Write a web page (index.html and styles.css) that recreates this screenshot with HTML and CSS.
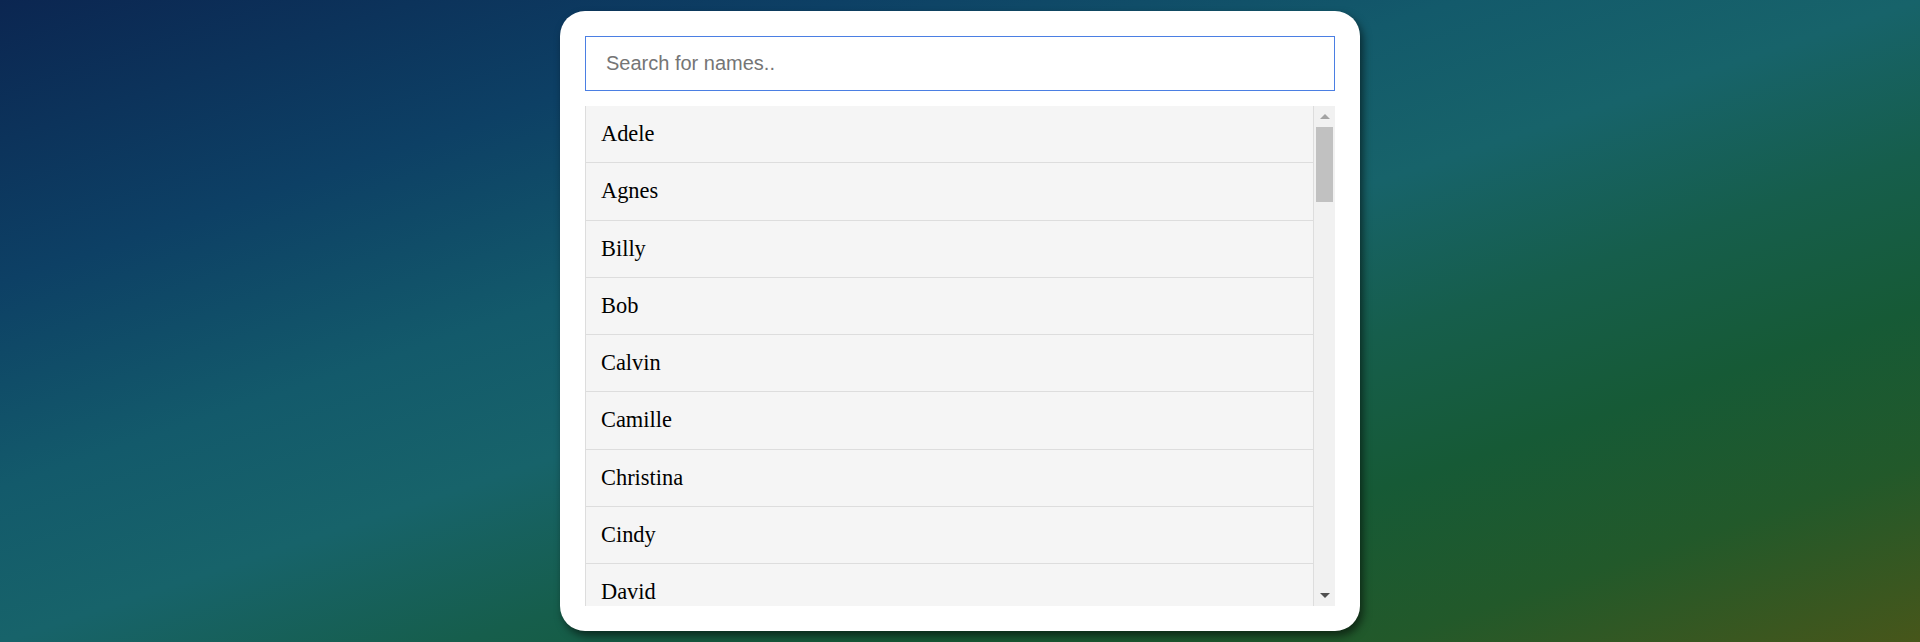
FILE: index.html
```html
<!DOCTYPE html>
<html lang="en">
<head>
<meta charset="utf-8">
<title>Search names</title>
<link rel="stylesheet" href="styles.css">
</head>
<body>
<main class="card">
  <input class="search" type="text" placeholder="Search for names..">
  <div class="listbox">
    <ul class="names">
      <li>Adele</li>
      <li>Agnes</li>
      <li>Billy</li>
      <li>Bob</li>
      <li>Calvin</li>
      <li>Camille</li>
      <li>Christina</li>
      <li>Cindy</li>
      <li>David</li>
    </ul>
    <div class="scrollbar" aria-hidden="true">
      <div class="sb-btn">
        <svg width="10" height="5" viewBox="0 0 10 5"><polygon points="0,5 10,5 5,0" fill="#a3a3a3"/></svg>
      </div>
      <div class="sb-track"><div class="sb-thumb"></div></div>
      <div class="sb-btn">
        <svg width="10" height="5" viewBox="0 0 10 5"><polygon points="0,0 10,0 5,5" fill="#505050"/></svg>
      </div>
    </div>
  </div>
</main>
</body>
</html>
```
FILE: styles.css
```css
html, body {
  margin: 0;
  height: 100%;
}

body {
  display: flex;
  align-items: center;
  justify-content: center;
  background: linear-gradient(to bottom right,
    #0b2651 0%,
    #0d4065 22%,
    #135a6b 38%,
    #17636a 50%,
    #165e4c 62%,
    #165a36 74%,
    #22592a 86%,
    #47561a 100%);
  font-family: "Liberation Serif", serif;
}

.card {
  box-sizing: border-box;
  width: 800px;
  padding: 25px;
  background: #fff;
  border-radius: 25px;
  box-shadow: 3px 5px 8px rgba(0, 0, 0, 0.55);
  display: flex;
  flex-direction: column;
  gap: 15px;
}

.search {
  box-sizing: border-box;
  width: 100%;
  height: 55px;
  margin: 0;
  padding: 0 20px;
  border: 1px solid #4b7fe3;
  outline: none;
  font-family: "Liberation Sans", Arial, sans-serif;
  font-size: 20px;
  color: #000;
  background: #fff;
}

.search::placeholder {
  color: #757575;
}

.listbox {
  display: flex;
  height: 500px;
}

.names {
  flex: 1;
  list-style: none;
  margin: 0;
  padding: 0;
  overflow: hidden;
}

.names li {
  padding: 16px 15px;
  line-height: 24.25px;
  font-size: 22.4px;
  color: #000;
  background: #f5f5f5;
  border-left: 1px solid #ddd;
  border-right: 1px solid #ddd;
  border-bottom: 1px solid #ddd;
}

.scrollbar {
  width: 21px;
  flex: none;
  background: #f1f1f1;
  display: flex;
  flex-direction: column;
}

.sb-btn {
  height: 21px;
  flex: none;
  display: flex;
  align-items: center;
  justify-content: center;
}

.sb-track {
  flex: 1;
  padding: 0 2px;
}

.sb-thumb {
  height: 75px;
  background: #c1c1c1;
}
```
